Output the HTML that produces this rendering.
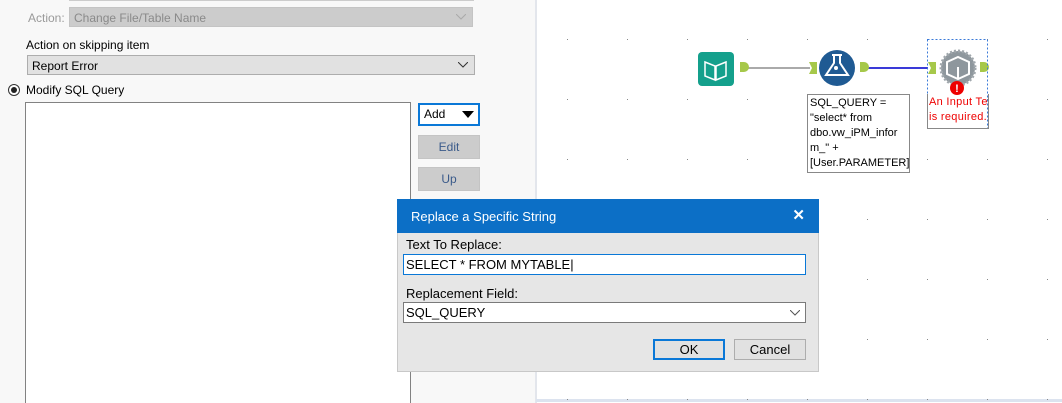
<!DOCTYPE html>
<html style="overflow:hidden;height:403px"><head><style>
body{margin:0;width:1062px;height:403px;overflow:hidden;font-family:"Liberation Sans",sans-serif;font-size:12px;position:relative;background:#fff}
.a{position:absolute}
.dot{position:absolute;width:1px;height:1px;background:#888}
.dlg{font-size:13px}
</style></head><body>
<div class="a" style="left:0;top:0;width:535px;height:403px;background:#f8f8f8;border-right:2px solid #e3e6ec"></div>
<div class="a" style="left:69px;top:0;width:405px;height:1px;background:#ccc"></div>
<div class="a" style="left:28px;top:11px;color:#9a9a9a">Action:</div>
<div class="a" style="left:69px;top:7px;width:404px;height:20px;background:#ccc;border:1px solid #c4c4c4;color:#8a8a8a;box-sizing:border-box;padding:3px 0 0 4px">Change File/Table Name<svg style="position:absolute;right:6px;top:6px" width="10" height="6"><path d="M0 0l5 5 5-5" fill="none" stroke="#aaa"/></svg></div>
<div class="a" style="left:26px;top:38px;color:#000">Action on skipping item</div>
<div class="a" style="left:27px;top:55px;width:448px;height:20px;background:#e1e1e1;border:1px solid #adadad;padding:3px 0 0 4px;box-sizing:border-box;color:#000">Report Error<svg style="position:absolute;right:6px;top:6px" width="10" height="6"><path d="M0 0l5 5 5-5" fill="none" stroke="#333"/></svg></div>
<div class="a" style="left:8px;top:84px;width:10px;height:10px;border:1px solid #333;border-radius:50%;background:#fff"></div>
<div class="a" style="left:11px;top:87px;width:6px;height:6px;border-radius:50%;background:#222"></div>
<div class="a" style="left:26px;top:83px">Modify SQL Query</div>
<div class="a" style="left:25px;top:102px;width:384px;height:310px;background:#fff;border:1px solid #828282"></div>
<div class="a" style="left:418px;top:103px;border:2px solid #0a78d7;background:#fff;padding:2px 0 0 4px;box-sizing:border-box;width:62px;height:23px">Add<span style="position:absolute;right:4px;top:6px;width:0;height:0;border-left:6px solid transparent;border-right:6px solid transparent;border-top:7px solid #000"></span></div>
<div class="a" style="left:418px;top:135px;width:60px;height:22px;background:#ccc;border:1px solid #c4c4c4;text-align:center;line-height:22px;color:#3a5a8a">Edit</div>
<div class="a" style="left:418px;top:167px;width:60px;height:22px;background:#ccc;border:1px solid #c4c4c4;text-align:center;line-height:22px;color:#3a5a8a">Up</div>
<div class="a" style="left:536px;top:399px;width:526px;height:3px;background:#dce3ef"></div>
<div id="dots"></div>
<script>
var h='';for(var x=567;x<1062;x+=60)for(var y=39;y<403;y+=60)h+='<div class="dot" style="left:'+x+'px;top:'+y+'px"></div>';document.getElementById('dots').innerHTML=h;
</script>
<svg class="a" style="left:680px;top:30px" width="330" height="110">
<line x1="64" y1="38" x2="130" y2="38" stroke="#aaa" stroke-width="2"/>
<line x1="185" y1="38" x2="248" y2="38" stroke="#3a3ad8" stroke-width="2"/>
<rect x="18" y="22" width="36" height="34" rx="4" fill="#14a08c"/>
<path d="M25 32 L35 36 L35 50 L25 46Z M46 32 L36 36 L36 50 L46 46Z" fill="none" stroke="#fff" stroke-width="1.5"/>
<path d="M60 32h4a3 3 0 010 10h-4z" fill="#a6c84a"/>
<path d="M129 32h8v12h-8l3-6z" fill="#a6c84a"/>
<circle cx="157" cy="38" r="18" fill="#1f5a93"/>
<path d="M152 25h10M154 25v8l-8 12h22l-8-12v-8" fill="none" stroke="#fff" stroke-width="2"/>
<circle cx="156" cy="38" r="2" fill="#fff"/>
<path d="M180 32h4a3 3 0 010 10h-4z" fill="#a6c84a"/>
<path d="M248 32h8v12h-8l3-6z" fill="#a6c84a"/>
<circle cx="278" cy="38" r="17" fill="#8e979d" stroke="#a0a7ac" stroke-width="3" stroke-dasharray="2 2"/>
<path d="M267 32l11-5 11 5v12l-11 5-11-5z M278 37v12" fill="none" stroke="#fff" stroke-width="2"/>
<path d="M300 32h4a3 3 0 010 10h-4z" fill="#a6c84a"/>
<circle cx="277" cy="58" r="7" fill="#e00"/>
<text x="277" y="62" font-size="11" font-weight="bold" fill="#fff" text-anchor="middle" font-family="Liberation Sans">!</text>
<rect x="247.5" y="9.5" width="60" height="89" fill="none" stroke="#3a7ad8" stroke-dasharray="2 2"/>
</svg>
<div class="a" style="left:807px;top:94px;border:1px solid #888;background:#fff;font-size:11px;line-height:15px;padding:1px 2px;box-sizing:border-box;width:103px;height:79px">SQL_QUERY =<br>"select* from<br>dbo.vw_iPM_infor<br>m_" +<br>[User.PARAMETER]</div>
<div class="a" style="left:927px;top:94px;width:62px;height:35px;border-left:1px solid #888;border-right:1px solid #888;border-bottom:1px solid #888;color:#e00;font-size:11px;line-height:15px;padding:1px 1px;white-space:nowrap;overflow:hidden;box-sizing:border-box;letter-spacing:0.3px">An Input Template<br>is required.</div>
<div class="a dlg" style="left:397px;top:199px;width:422px;height:173px;background:#e6e6e6;border:1px solid #c8c8c8;box-sizing:border-box"></div>
<div class="a dlg" style="left:397px;top:199px;width:422px;height:34px;background:#0c6fc6;color:#fff"><span style="position:absolute;left:14px;top:10px">Replace a Specific String</span><span style="position:absolute;right:14px;top:7px;font-weight:bold;font-size:15px">✕</span></div>
<div class="a dlg" style="left:406px;top:237px">Text To Replace:</div>
<div class="a dlg" style="left:403px;top:254px;width:403px;height:21px;background:#fff;border:1px solid #0a78d7;padding:2px 0 0 2px;box-sizing:border-box">SELECT * FROM MYTABLE|</div>
<div class="a dlg" style="left:406px;top:286px">Replacement Field:</div>
<div class="a dlg" style="left:403px;top:302px;width:403px;height:21px;background:#fff;border:1px solid #7a7a7a;padding:2px 0 0 2px;box-sizing:border-box">SQL_QUERY<svg style="position:absolute;right:5px;top:7px" width="10" height="6"><path d="M0 0l5 5 5-5" fill="none" stroke="#555"/></svg></div>
<div class="a dlg" style="left:653px;top:339px;width:72px;height:21px;background:#e1e1e1;border:2px solid #0a78d7;box-sizing:border-box;text-align:center;line-height:17px">OK</div>
<div class="a dlg" style="left:734px;top:339px;width:72px;height:21px;background:#e1e1e1;border:1px solid #adadad;box-sizing:border-box;text-align:center;line-height:19px">Cancel</div>
</body></html>
